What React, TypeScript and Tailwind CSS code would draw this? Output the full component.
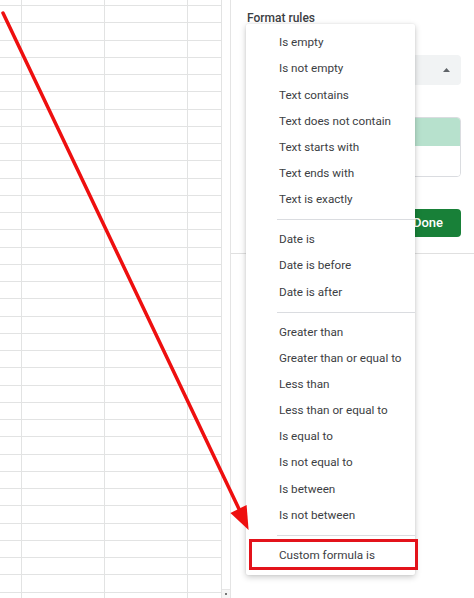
import React from 'react';

const groups: string[][] = [
  ['Is empty', 'Is not empty', 'Text contains', 'Text does not contain', 'Text starts with', 'Text ends with', 'Text is exactly'],
  ['Date is', 'Date is before', 'Date is after'],
  ['Greater than', 'Greater than or equal to', 'Less than', 'Less than or equal to', 'Is equal to', 'Is not equal to', 'Is between', 'Is not between'],
];

const SheetGrid: React.FC = () => {
  const rows = Array.from({ length: 35 });
  return (
    <div className="w-[222px] h-full overflow-hidden bg-white">
      <div className="flex h-[6px]">
        <div className="w-[22px] border-r border-b border-[#e2e3e3]" />
        <div className="w-[83px] border-r border-b border-[#e2e3e3]" />
        <div className="w-[83px] border-r border-b border-[#e2e3e3]" />
        <div className="w-[34px] border-r border-b border-[#e2e3e3]" />
      </div>
      {rows.map((_, i) => (
        <div key={i} className="flex h-[17.26px]">
          <div className="w-[22px] border-r border-b border-[#e2e3e3]" />
          <div className="w-[83px] border-r border-b border-[#e2e3e3]" />
          <div className="w-[83px] border-r border-b border-[#e2e3e3]" />
          <div className="w-[34px] border-r border-b border-[#e2e3e3]" />
        </div>
      ))}
    </div>
  );
};

const RuleMenu: React.FC = () => {
  return (
    <div className="absolute left-[15px] top-[24px] w-[169px] py-[6px] bg-white rounded-[2px] shadow-[0_2px_6px_rgba(0,0,0,0.22),0_0_2px_rgba(0,0,0,0.08)]">
      {groups.map((items, gi) => (
        <div key={gi}>
          {items.map((label) => (
            <div key={label} className="h-[26.15px] pl-[33px] flex items-center text-[11.7px] text-[#3c4043] whitespace-nowrap">
              {label}
            </div>
          ))}
          <div className="h-[14px] flex items-center">
            <div className="ml-[31px] flex-1 h-px bg-[#dadce0]" />
          </div>
        </div>
      ))}
      <div className="relative h-[26.15px] pl-[33px] flex items-center text-[11.7px] text-[#3c4043]">
        Custom formula is
        <span className="absolute -top-[4px] -bottom-[1px] left-[3px] -right-[3px] border-[3px] border-[#e3131b]" />
      </div>
    </div>
  );
};

const App: React.FC = () => {
  return (
    <div className="relative w-[474px] h-[598px] overflow-hidden bg-white flex font-['Roboto','Liberation_Sans',sans-serif]">
      <SheetGrid />

      {/* scrollbar strip */}
      <div className="w-[8px] h-full flex flex-col justify-end bg-white">
        <div className="h-[9px] border-t border-[#e6e6e6] bg-[#f5f5f5] flex items-center justify-center">
          <div className="w-[2px] h-[2px] bg-[#777]" />
        </div>
      </div>

      {/* side panel */}
      <div className="relative flex-1 h-full border-l border-[#e4e4e4] bg-white">
        <div className="pl-[15px] pr-[13px] pt-[10px] pb-[16px] flex flex-col">
          <div className="pl-px h-[16px] leading-[16px] text-[12px] font-medium text-[#3c4043]">Format rules</div>
          <div className="mt-[29px] h-[30px] rounded-[4px] bg-[#f1f3f4] flex items-center justify-end pr-[11px]">
            <svg width="7" height="4" viewBox="0 0 7 4">
              <path d="M0 4 L3.5 0 L7 4 Z" fill="#5f6368" />
            </svg>
          </div>
          <div className="mt-[32px] h-[60px] rounded-[4px] border border-[#dadce0] overflow-hidden flex flex-col">
            <div className="h-[28px] bg-[#b7e1cd]" />
            <div className="flex-1 bg-white" />
          </div>
          <div className="mt-[32px] self-end w-[66px] h-[28px] rounded-[4px] bg-[#188038] flex items-center justify-center text-[13px] font-medium text-white">
            Done
          </div>
        </div>
        <div className="h-px bg-[#e0e0e0]" />

        <RuleMenu />
      </div>

      {/* red arrow */}
      <svg className="absolute inset-0 pointer-events-none" width="474" height="598" viewBox="0 0 474 598">
        <line x1="3" y1="13" x2="239" y2="509" stroke="#ee0f0f" strokeWidth="3.5" strokeLinecap="round" />
        <polygon points="230.4,512.9 246.6,505.1 248.6,530" fill="#ee0f0f" />
      </svg>
    </div>
  );
};

export default App;
